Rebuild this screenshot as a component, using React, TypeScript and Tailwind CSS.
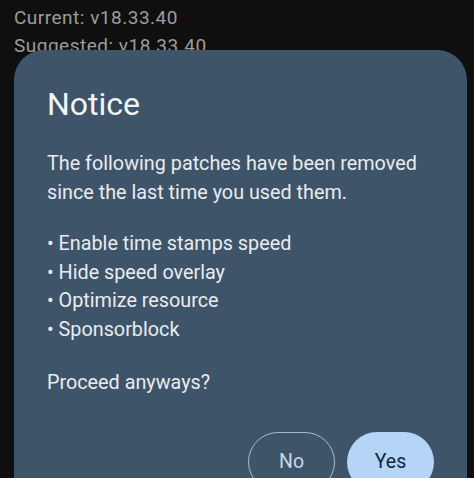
export default function App() {
  return (
    <div className="w-[474px] h-[478px] overflow-hidden bg-[#0f0f10] font-['Roboto',sans-serif] relative">
      <div className="pl-[14px] pt-[4px] text-[19px] tracking-[0.5px] leading-[28px] text-[#9c9c9c]">
        <div>Current: v18.33.40</div>
        <div>Suggested: v18.33.40</div>
      </div>
      <div className="absolute left-[14px] top-[50px] w-[453px] h-[520px] rounded-[30px] bg-[#3e5468] pl-[33px] pr-[20px] pt-[34px]">
        <div className="text-[32px] leading-[40px] text-[#f2f4f7]">Notice</div>
        <div className="mt-[26px] text-[19.8px] leading-[28.5px] text-[#e8ecf1]">
          <div>The following patches have been removed</div>
          <div>since the last time you used them.</div>
          <div className="h-[23px]" />
          <div>• Enable time stamps speed</div>
          <div>• Hide speed overlay</div>
          <div>• Optimize resource</div>
          <div>• Sponsorblock</div>
          <div className="h-[25px]" />
          <div>Proceed anyways?</div>
        </div>
        <div className="mt-[34px] flex gap-[12px] pl-[201px]">
          <div className="w-[87px] h-[60px] rounded-full border border-[#a9bccd] flex items-center justify-center text-[19.5px] text-[#c9d8e8]">
            No
          </div>
          <div className="w-[87px] h-[60px] rounded-full bg-[#b5d5f6] flex items-center justify-center text-[19.5px] text-[#12263c]">
            Yes
          </div>
        </div>
      </div>
    </div>
  );
}
